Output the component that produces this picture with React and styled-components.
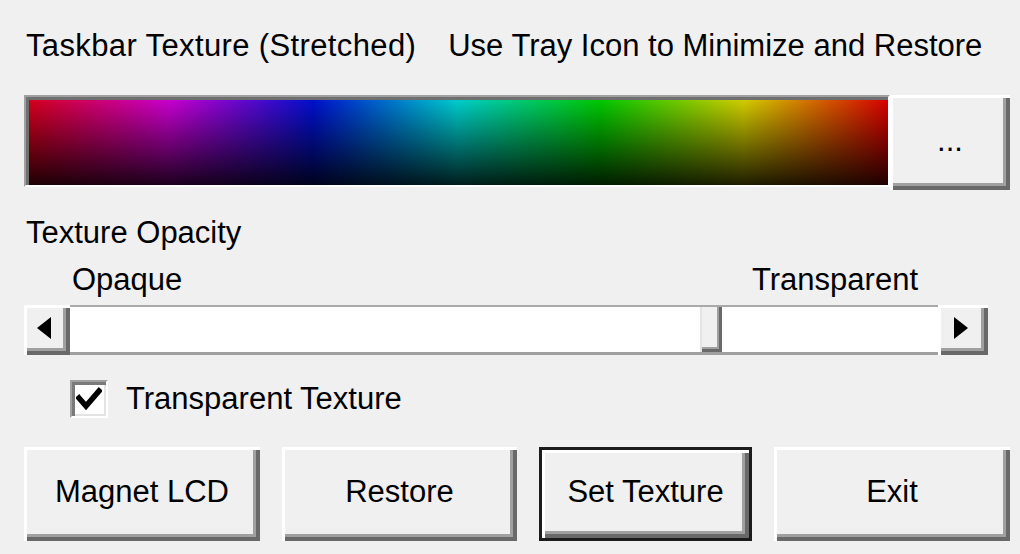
import React from "react";
import styled, { createGlobalStyle, css } from "styled-components";

const GlobalStyle = createGlobalStyle`
  html, body {
    margin: 0;
    padding: 0;
    background: #f0f0f0;
  }
  * {
    box-sizing: border-box;
  }
`;

const raised = css`
  background: #f0f0f0;
  box-shadow:
    inset 3px 3px 0 #ffffff,
    inset -4px -4px 0 #696969,
    inset -7px -7px 0 #a0a0a0;
`;

const Dialog = styled.div`
  width: 1020px;
  height: 554px;
  overflow: hidden;
  padding: 28px 10px 0 24px;
  display: flex;
  flex-direction: column;
  background: #f0f0f0;
  color: #000;
  font-family: "Liberation Sans", Arial, sans-serif;
  font-size: 31px;
  line-height: 36px;
`;

const Header = styled.div`
  display: flex;
  gap: 32px;
  padding-left: 2px;
  white-space: nowrap;
`;

const HeaderText = styled.span`
  letter-spacing: ${(p) => p.$spacing || 0}px;
`;

const ColorRow = styled.div`
  display: flex;
  align-items: flex-start;
  margin-top: 31px;
  height: 95px;
`;

const Spectrum = styled.div`
  width: 866px;
  height: 92px;
  border-top: 2px solid #a0a0a0;
  border-left: 2px solid #a0a0a0;
  border-bottom: 2px solid #ffffff;
  border-right: 2px solid #ffffff;
  box-shadow: inset 3px 3px 0 #6f6f6f;
  background:
    linear-gradient(to bottom, rgba(0, 0, 0, 0) 0%, rgba(0, 0, 0, 0.86) 100%),
    linear-gradient(
      to right,
      rgb(218, 0, 24) 0%,
      rgb(205, 0, 212) 16.6%,
      rgb(0, 16, 210) 33.3%,
      rgb(0, 210, 210) 50%,
      rgb(0, 205, 0) 66.6%,
      rgb(215, 210, 0) 83.3%,
      rgb(220, 0, 0) 100%
    );
`;

const Button = styled.button`
  ${raised};
  border: none;
  padding: 0 0 4px 0;
  margin: 0;
  width: ${(p) => p.$w}px;
  height: ${(p) => p.$h || 94}px;
  font-family: inherit;
  font-size: 31px;
  line-height: 36px;
  color: #000;
  cursor: default;
  ${(p) =>
    p.$default &&
    css`
      border: 3px solid #1c1c1c;
    `}
`;

const SectionLabel = styled.div`
  margin-top: 25px;
  padding-left: 2px;
`;

const ScaleLabels = styled.div`
  margin-top: 11px;
  width: 964px;
  display: flex;
  justify-content: space-between;
  padding: 0 70px 0 48px;
`;

const ScrollBar = styled.div`
  margin-top: 7px;
  width: 964px;
  height: 50px;
  display: flex;
`;

const ArrowButton = styled.div`
  ${raised};
  width: ${(p) => p.$w}px;
  height: 50px;
  display: flex;
  align-items: center;
  justify-content: center;
  padding: ${(p) => (p.$dir === "left" ? "0 6px 4px 0" : "0 4px 4px 0")};
`;

const Track = styled.div`
  flex: 1;
  height: 50px;
  background: #ffffff;
  border-top: 2px solid #a9a9a9;
  border-bottom: 3px solid #a0a0a0;
  display: flex;
`;

const Thumb = styled.div`
  width: 22px;
  height: 100%;
  background: #f0f0f0;
  box-shadow:
    inset 2px 0 0 #e3e3e3,
    inset -3px -3px 0 #696969,
    inset -5px -5px 0 #a0a0a0;
`;

const CheckRow = styled.div`
  margin-top: 25px;
  display: flex;
  align-items: center;
  gap: 18px;
  padding-left: 46px;
  height: 38px;
`;

const CheckBox = styled.div`
  width: 38px;
  height: 38px;
  background: #ffffff;
  border-top: 2px solid #a0a0a0;
  border-left: 2px solid #a0a0a0;
  border-right: 2px solid #ffffff;
  border-bottom: 2px solid #ffffff;
  box-shadow: inset 3px 3px 0 #7a7a7a, inset -2px -2px 0 #e3e3e3;
  display: flex;
  align-items: center;
  justify-content: center;
`;

const ButtonRow = styled.div`
  margin-top: 29px;
  display: flex;
  gap: 22px;
`;

const Arrow = ({ dir }) => (
  <svg width="14" height="22" viewBox="0 0 14 22">
    {dir === "left" ? (
      <polygon points="14,0 14,22 0,11" fill="#000" />
    ) : (
      <polygon points="0,0 0,22 14,11" fill="#000" />
    )}
  </svg>
);

const Check = () => (
  <svg width="26" height="24" viewBox="0 0 26 24">
    <polyline
      points="3,11 10,19 23,4"
      fill="none"
      stroke="#000"
      strokeWidth="5.5"
      strokeLinecap="square"
    />
  </svg>
);

const opacity = 0.745;

export default function App() {
  return (
    <>
      <GlobalStyle />
      <Dialog>
        <Header>
          <HeaderText $spacing={0.37}>Taskbar Texture (Stretched)</HeaderText>
          <HeaderText>Use Tray Icon to Minimize and Restore</HeaderText>
        </Header>

        <ColorRow>
          <Spectrum />
          <Button $w={120} $h={95}>...</Button>
        </ColorRow>

        <SectionLabel>Texture Opacity</SectionLabel>
        <ScaleLabels>
          <span>Opaque</span>
          <span>Transparent</span>
        </ScaleLabels>
        <ScrollBar>
          <ArrowButton $w={46} $dir="left">
            <Arrow dir="left" />
          </ArrowButton>
          <Track>
            <Thumb style={{ marginLeft: `calc((100% - 22px) * ${opacity})` }} />
          </Track>
          <ArrowButton $w={50} $dir="right">
            <Arrow dir="right" />
          </ArrowButton>
        </ScrollBar>

        <CheckRow>
          <CheckBox>
            <Check />
          </CheckBox>
          <span>Transparent Texture</span>
        </CheckRow>

        <ButtonRow>
          <Button $w={236}>Magnet LCD</Button>
          <Button $w={235}>Restore</Button>
          <Button $w={213} $default>Set Texture</Button>
          <Button $w={236}>Exit</Button>
        </ButtonRow>
      </Dialog>
    </>
  );
}
